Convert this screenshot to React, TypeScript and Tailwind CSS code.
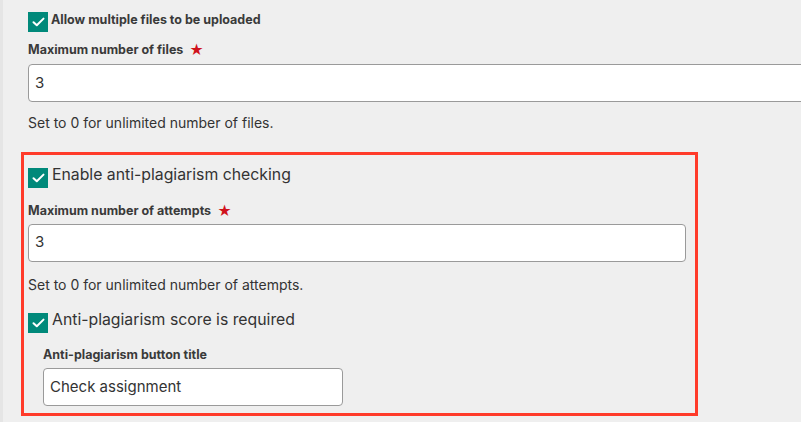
import React from "react";

function Check() {
  return (
    <span className="flex h-5 w-5 shrink-0 items-center justify-center bg-[#00897a]">
      <svg width="13" height="10" viewBox="0 0 13 10" fill="none">
        <path d="M1.5 5.2 L4.8 8.3 L11.5 1.6" stroke="white" strokeWidth="2" strokeLinecap="round" strokeLinejoin="round" />
      </svg>
    </span>
  );
}

function Star() {
  return <span className="ml-[6px] text-[14px] leading-none text-[#d0121b]">★</span>;
}

export default function App() {
  return (
    <div className="flex h-[422px] w-[801px] overflow-hidden bg-[#efefef] text-[#333] [font-family:Inter,'Liberation_Sans',sans-serif]">
      <div className="w-[3px] shrink-0 bg-[#e5e5e5]" />
      <div className="flex min-w-0 flex-1 flex-col pl-[25px] pt-[12px]">
        <div className="flex items-start gap-[3px]">
          <Check />
          <span className="text-[12.5px] font-bold leading-[13px] pt-[1px] text-[#3a3a3a]">Allow multiple files to be uploaded</span>
        </div>
        <div className="mt-[9px] flex items-center text-[12.5px] font-bold text-[#3a3a3a]">
          Maximum number of files
          <Star />
        </div>
        <div className="mt-[4px] flex h-[38px] w-[800px] items-center rounded-[4px] border border-[#9a9a9a] bg-white px-[6px] text-[15px]">3</div>
        <div className="mt-[10px] text-[14px]">Set to 0 for unlimited number of files.</div>

        <div className="ml-[-7px] mt-[19px] flex h-[264px] w-[677px] flex-col border-[3.5px] border-[#ff3b2a] pl-[4px] pt-[13px]">
          <div className="flex items-center gap-[4px]">
            <Check />
            <span className="text-[15.8px] leading-none mt-[-5px]">Enable anti-plagiarism checking</span>
          </div>
          <div className="mt-[14px] flex items-center text-[12.5px] font-bold text-[#3a3a3a]">
            Maximum number of attempts
            <Star />
          </div>
          <div className="mt-[3px] flex h-[38px] w-[658px] items-center rounded-[4px] border border-[#9a9a9a] bg-white px-[6px] text-[15px]">3</div>
          <div className="mt-[12px] text-[14px]">Set to 0 for unlimited number of attempts.</div>
          <div className="mt-[18px] flex items-center gap-[4px]">
            <Check />
            <span className="text-[15.8px] leading-none mt-[-5px]">Anti-plagiarism score is required</span>
          </div>
          <div className="ml-[15px] mt-[13px] text-[12.5px] font-bold text-[#3a3a3a]">Anti-plagiarism button title</div>
          <div className="ml-[15px] mt-[4px] flex h-[38px] w-[300px] items-center rounded-[4px] border border-[#9a9a9a] bg-white px-[6px] text-[15px]">Check assignment</div>
        </div>
      </div>
    </div>
  );
}
